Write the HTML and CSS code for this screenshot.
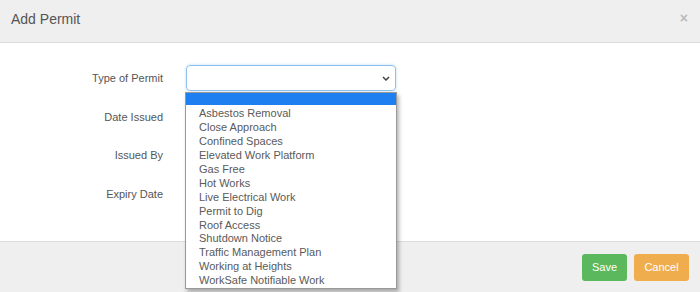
FILE: index.html
```html
<!DOCTYPE html>
<html>
<head>
  <meta charset="utf-8">
  <title>Add Permit</title>
  <link rel="stylesheet" href="styles.css">
</head>
<body>

<div class="modal">
  <div class="modal-header">
    <h4>Add Permit</h4>
    <span class="close">&times;</span>
  </div>

  <div class="modal-body">
    <div class="row">
      <label>Type of Permit</label>
      <div class="field">
        <div class="select">
          <svg width="8" height="5" viewBox="0 0 8 5"><path d="M1 1 L4 4 L7 1" fill="none" stroke="#444" stroke-width="1.5"/></svg>
        </div>
        <ul class="dropdown">
          <li class="blank"></li>
          <li>Asbestos Removal</li>
          <li>Close Approach</li>
          <li>Confined Spaces</li>
          <li>Elevated Work Platform</li>
          <li>Gas Free</li>
          <li>Hot Works</li>
          <li>Live Electrical Work</li>
          <li>Permit to Dig</li>
          <li>Roof Access</li>
          <li>Shutdown Notice</li>
          <li>Traffic Management Plan</li>
          <li>Working at Heights</li>
          <li>WorkSafe Notifiable Work</li>
        </ul>
      </div>
    </div>
    <div class="row"><label>Date Issued</label><div class="field"></div></div>
    <div class="row"><label>Issued By</label><div class="field"></div></div>
    <div class="row"><label>Expiry Date</label><div class="field"></div></div>
  </div>

  <div class="modal-footer">
    <button class="btn save">Save</button>
    <button class="btn cancel">Cancel</button>
  </div>
</div>

</body>
</html>
```

FILE: styles.css
```css
body { margin:0; font-family:"Liberation Sans", Arial, sans-serif; background:#fff; color:#555; }
.modal { width:700px; }

.modal-header { background:#efefef; border-bottom:1px solid #dcdcdc; display:flex; align-items:center; justify-content:space-between; padding:0 11px; box-sizing:border-box; height:43px; }
.modal-header h4 { margin:0; font-size:14px; font-weight:normal; color:#555; position:relative; top:-2px; }
.close { font-size:14px; color:#bbb; font-weight:bold; position:relative; top:-3px; right:1px; }

.modal-body { height:198px; padding-top:22px; box-sizing:border-box; }
.row { display:grid; grid-template-columns:163px 210px; column-gap:23px; height:26px; margin-bottom:12.7px; align-items:center; }
.row label { text-align:right; font-size:11px; color:#555; }
.field { position:relative; height:26px; }

.select { height:26px; box-sizing:border-box; border:1px solid #8fc1ee; border-radius:4px; box-shadow:0 0 3px rgba(102,175,233,.45); display:flex; align-items:center; justify-content:flex-end; padding-right:5px; }

.dropdown { position:absolute; top:27px; left:-1px; width:210px; margin:0; padding:0; list-style:none; background:#fff; border:1px solid #999; box-shadow:2px 3px 4px rgba(0,0,0,.3); z-index:2; }
.dropdown li { height:13.9px; line-height:13.9px; font-size:11px; color:#5a5a5a; padding-left:13px; white-space:nowrap; }
.dropdown li.blank { background:#1e7ff0; height:12px; margin-bottom:2.4px; }

.modal-footer { height:51px; background:#efefef; border-top:1px solid #dcdcdc; box-sizing:border-box; display:flex; justify-content:flex-end; align-items:center; gap:7px; padding:0 11px 0 0; }
.btn { border:none; border-radius:3px; color:#fff; font-family:inherit; font-size:11px; height:27px; padding:0; }
.save { background:#5cb85c; width:45px; }
.cancel { background:#f0ad4e; width:55px; }
```
